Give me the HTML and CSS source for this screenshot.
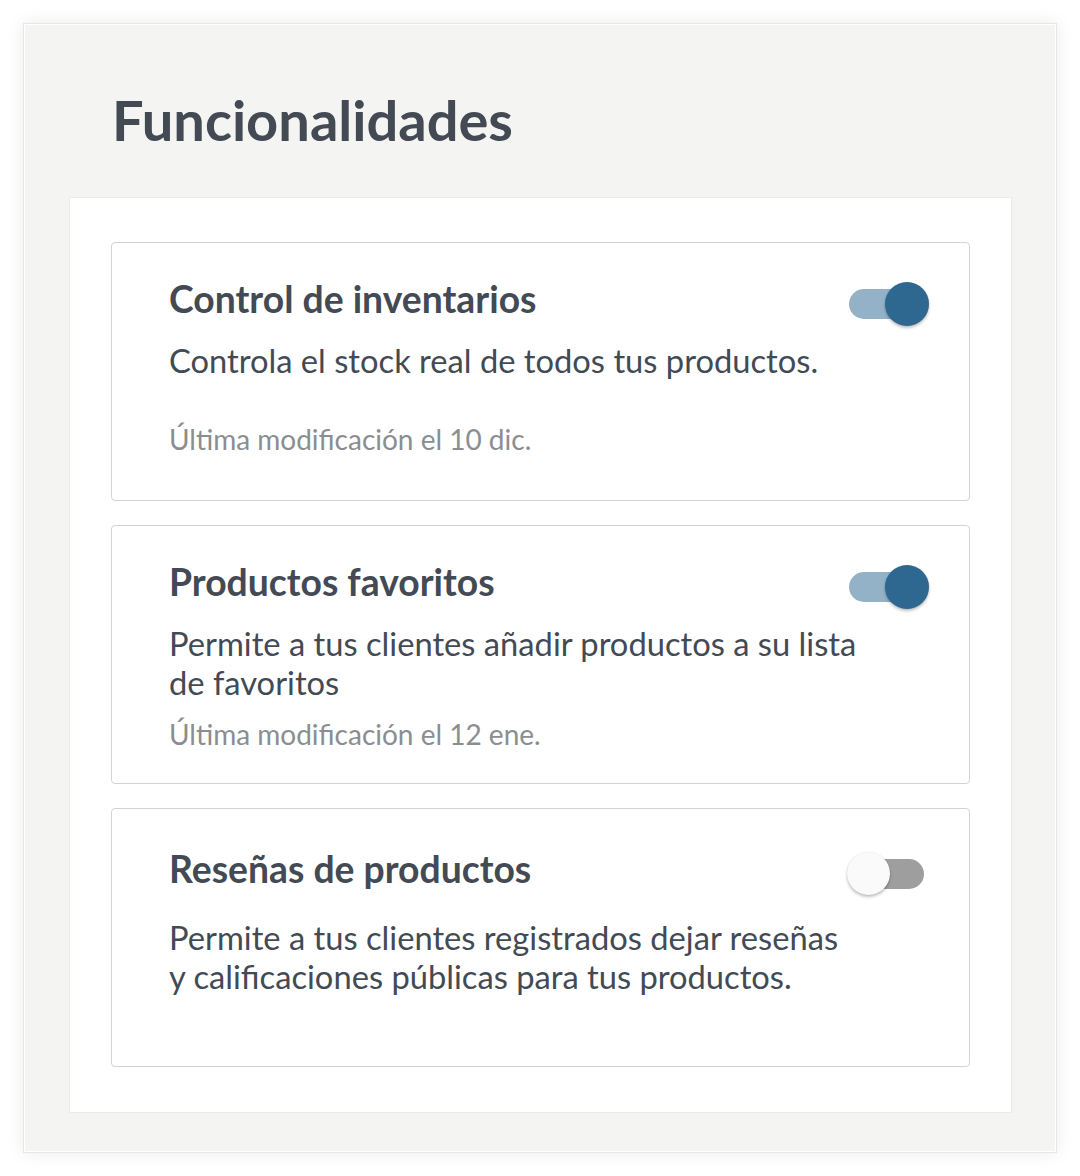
FILE: index.html
```html
<!DOCTYPE html>
<html lang="es">

<head>
    <meta charset="UTF-8">
    <meta name="viewport" content="width=device-width, initial-scale=1.0">
    <title>Funcionalidades</title>
    <link rel="stylesheet" href="styles.css">
</head>

<body>

    <div class="panel">
        <h1 class="panel-title">Funcionalidades</h1>

        <div class="sheet">
            <!-- Inventory -->
            <div class="feature">
                <div class="feature-text">
                    <h2 class="feature-name">Control de inventarios</h2>
                    <p class="feature-desc feature-desc--single">Controla el stock real de todos tus productos.</p>
                    <p class="feature-meta">Última modificación el 10 dic.</p>
                </div>
                <span class="switch is-on"></span>
            </div>

            <!-- Favorites -->
            <div class="feature">
                <div class="feature-text">
                    <h2 class="feature-name">Productos favoritos</h2>
                    <p class="feature-desc">Permite a tus clientes añadir productos a su lista de favoritos</p>
                    <p class="feature-meta">Última modificación el 12 ene.</p>
                </div>
                <span class="switch is-on"></span>
            </div>

            <!-- Reviews -->
            <div class="feature feature--loose">
                <div class="feature-text">
                    <h2 class="feature-name">Reseñas de productos</h2>
                    <p class="feature-desc">Permite a tus clientes registrados dejar reseñas y calificaciones públicas para tus productos.</p>
                </div>
                <span class="switch"></span>
            </div>
        </div>
    </div>

</body>

</html>
```

FILE: styles.css
```css
* {
    box-sizing: border-box;
    margin: 0;
    padding: 0;
    font-family: Lato, 'Open Sans', sans-serif;
}

body {
    background-color: #ffffff;
    color: #434a54;
    padding: 23px;
}

.panel {
    background-color: #f4f4f3;
    border: 1px solid #e6e6e6;
    box-shadow: inset 0 0 0 1px #ffffff, 0 0 18px rgba(0, 0, 0, 0.08);
    padding: 62px 44px 39px 45px;
}

.panel-title {
    font-size: 56px;
    line-height: 67px;
    font-weight: 700;
    color: #434a54;
    padding-left: 43px;
    margin-bottom: 44px;
}

.sheet {
    background-color: #ffffff;
    border: 1px solid #ebebeb;
    padding: 44px 41px 45px;
    display: flex;
    flex-direction: column;
    gap: 24px;
}

.feature {
    height: 259px;
    border: 1px solid #d3d3d3;
    border-radius: 4px;
    padding: 34px 40px 0 57px;
    display: flex;
    align-items: flex-start;
}

.feature--loose {
    padding-top: 38px;
}

.feature-text {
    flex: 0 0 690px;
}

.feature-name {
    font-size: 37.3px;
    line-height: 44px;
    font-weight: 700;
    color: #434a54;
    margin-bottom: 20px;
}

.feature--loose .feature-name {
    margin-bottom: 27px;
}

.feature-desc {
    font-size: 32.7px;
    line-height: 39px;
    color: #434a54;
}

.feature-desc + .feature-meta {
    margin-top: 15px;
}

.feature-desc--single + .feature-meta {
    margin-top: 42px;
}

.feature-meta {
    font-size: 28px;
    line-height: 34px;
    color: #8b8e91;
}

/* Material-style switch */
.switch {
    position: relative;
    flex: 0 0 80px;
    height: 44px;
    margin: 5px 0 0 -10px;
}

.switch::before {
    content: "";
    position: absolute;
    left: 2px;
    top: 7px;
    width: 73px;
    height: 30px;
    border-radius: 15px;
    background-color: #9e9e9e;
}

.switch::after {
    content: "";
    position: absolute;
    left: -2px;
    top: 0;
    width: 43px;
    height: 43px;
    border-radius: 50%;
    background-color: #fafafa;
    box-shadow: 0 2px 3px rgba(0, 0, 0, 0.25), 0 0 1px rgba(0, 0, 0, 0.12);
}

.switch.is-on::before {
    left: 0;
    background-color: #93b2c7;
}

.switch.is-on::after {
    left: 36px;
    width: 44px;
    height: 44px;
    background-color: #2e6891;
}
```
